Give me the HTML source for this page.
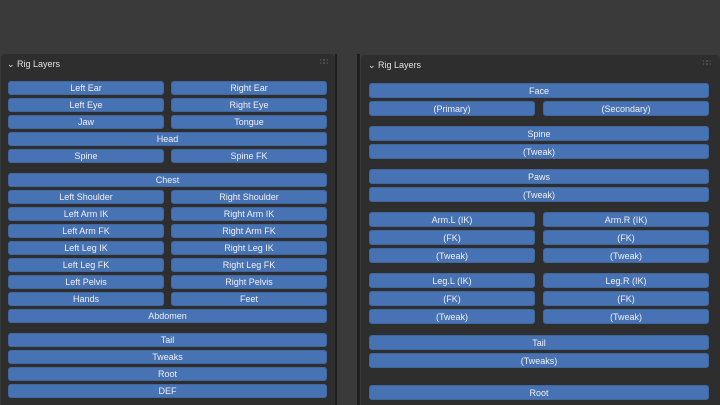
<!DOCTYPE html><html><head><style>
body{margin:0;width:720px;height:405px;background:#3a3a3a;position:relative;overflow:hidden;font-family:"Liberation Sans",sans-serif;}
.p{position:absolute;background:#2e2e2e;border-radius:4px 4px 0 0}
.sep{position:absolute;background:#1f1f1f}
.b{position:absolute;background:#4772b3;border:1px solid #41679f;box-sizing:border-box;border-radius:3px;color:#f0f0f0;font-size:9px;text-align:center;display:flex;align-items:center;justify-content:center}
.h{position:absolute;color:#e0e0e0;font-size:9px}
.d{position:absolute;color:#888;font-size:7px;letter-spacing:-1px}
</style></head><body>
<div class="p" style="left:1px;top:54px;width:334px;height:351px"></div>
<div class="sep" style="left:335px;top:54px;width:2px;height:351px"></div>
<div class="sep" style="left:357px;top:54px;width:3px;height:351px"></div>
<div class="p" style="left:361px;top:55px;width:359px;height:350px"></div>
<div class="h" style="left:7px;top:59px">⌄ Rig Layers</div>
<div class="d" style="left:320px;top:58px">∷∷</div>
<div class="h" style="left:368px;top:60px">⌄ Rig Layers</div>
<div class="d" style="left:703px;top:59px">∷∷</div>
<script>
function B(x,y,w,h,t){var d=document.createElement('div');d.className='b';d.style.cssText='left:'+x+'px;top:'+y+'px;width:'+w+'px;height:'+h+'px';d.textContent=t;document.body.appendChild(d);}
var L=[[81,'Left Ear','Right Ear'],[98,'Left Eye','Right Eye'],[115,'Jaw','Tongue'],[132,'Head'],[149,'Spine','Spine FK'],[173,'Chest'],[190,'Left Shoulder','Right Shoulder'],[207,'Left Arm IK','Right Arm IK'],[224,'Left Arm FK','Right Arm FK'],[241,'Left Leg IK','Right Leg IK'],[258,'Left Leg FK','Right Leg FK'],[275,'Left Pelvis','Right Pelvis'],[292,'Hands','Feet'],[309,'Abdomen'],[333,'Tail'],[350,'Tweaks'],[367,'Root'],[384,'DEF']];
L.forEach(function(r){if(r.length==3){B(8,r[0],156,14,r[1]);B(171,r[0],156,14,r[2]);}else B(8,r[0],319,14,r[1]);});
var R=[[83,'Face'],[101,'(Primary)','(Secondary)'],[126,'Spine'],[144,'(Tweak)'],[169,'Paws'],[187,'(Tweak)'],[212,'Arm.L (IK)','Arm.R (IK)'],[230,'(FK)','(FK)'],[248,'(Tweak)','(Tweak)'],[273,'Leg.L (IK)','Leg.R (IK)'],[291,'(FK)','(FK)'],[309,'(Tweak)','(Tweak)'],[335,'Tail'],[353,'(Tweaks)'],[385,'Root']];
R.forEach(function(r){if(r.length==3){B(369,r[0],166,15,r[1]);B(543,r[0],166,15,r[2]);}else B(369,r[0],340,15,r[1]);});
</script>
</body></html>
